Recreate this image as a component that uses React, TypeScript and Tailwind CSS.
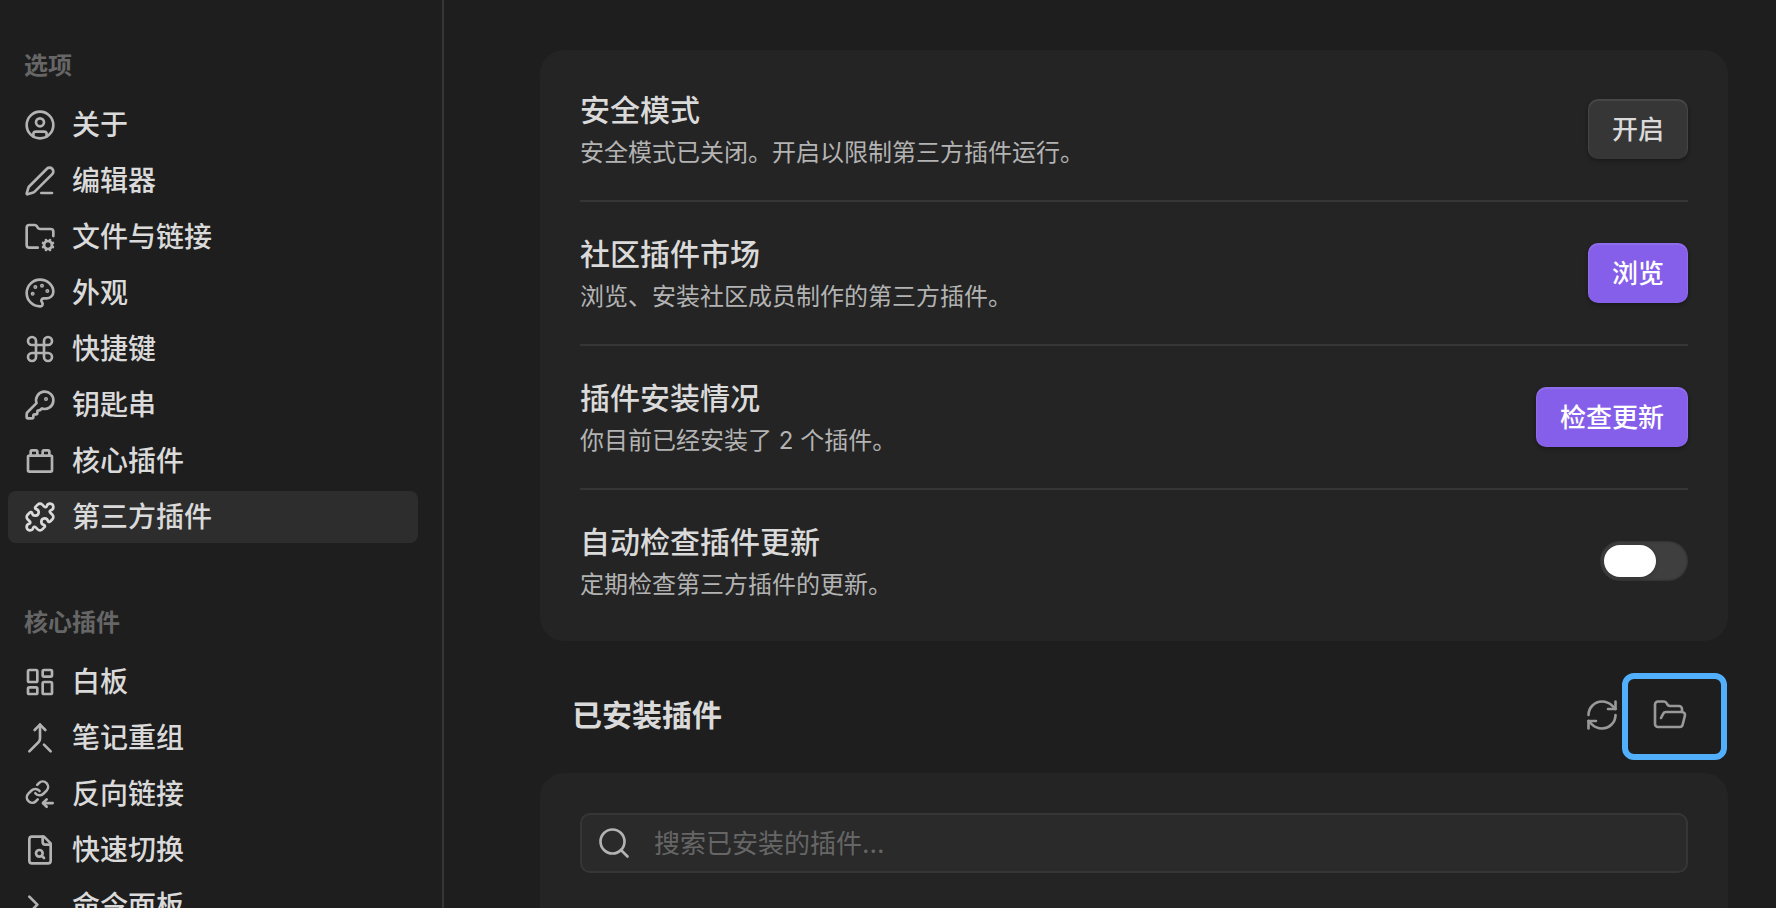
import { useState, type ReactNode } from 'react';
import {
  CircleUser,
  Command,
  FolderCog,
  FolderOpen,
  KeyRound,
  LayoutDashboard,
  Merge,
  Palette,
  PenLine,
  Puzzle,
  RefreshCw,
  Search,
  Terminal,
  ToyBrick,
  X,
} from 'lucide-react';

const BacklinkIcon = () => (
  <svg
    viewBox="0 0 24 24"
    fill="none"
    stroke="currentColor"
    strokeWidth="2"
    strokeLinecap="round"
    strokeLinejoin="round"
  >
    <g transform="translate(0.5 1) scale(0.8)" strokeWidth="2.4">
      <path d="M10 13a5 5 0 0 0 7.54.54l3-3a5 5 0 0 0-7.07-7.07l-1.72 1.71" />
      <path d="M14 11a5 5 0 0 0-7.54-.54l-3 3a5 5 0 0 0 7.07 7.07l1.71-1.71" />
    </g>
    <path d="M21.5 18.8h-7" />
    <path d="m17 16-2.8 2.8 2.8 2.8" />
  </svg>
);

const FileSearchIcon = () => (
  <svg
    viewBox="0 0 24 24"
    fill="none"
    stroke="currentColor"
    strokeWidth="2"
    strokeLinecap="round"
    strokeLinejoin="round"
  >
    <path d="M15 2H6a2 2 0 0 0-2 2v16a2 2 0 0 0 2 2h12a2 2 0 0 0 2-2V7Z" />
    <path d="M14 2v4a2 2 0 0 0 2 2h4" />
    <circle cx="11.5" cy="14.5" r="2.5" />
    <path d="M13.3 16.3 15 18" />
  </svg>
);

const navGroups = [
  {
    title: '选项',
    items: [
      { label: '关于', icon: CircleUser },
      { label: '编辑器', icon: PenLine },
      { label: '文件与链接', icon: FolderCog },
      { label: '外观', icon: Palette },
      { label: '快捷键', icon: Command },
      { label: '钥匙串', icon: KeyRound },
      { label: '核心插件', icon: ToyBrick },
      { label: '第三方插件', icon: Puzzle },
    ],
  },
  {
    title: '核心插件',
    items: [
      { label: '白板', icon: LayoutDashboard },
      { label: '笔记重组', icon: Merge },
      { label: '反向链接', icon: BacklinkIcon },
      { label: '快速切换', icon: FileSearchIcon },
      { label: '命令面板', icon: Terminal },
    ],
  },
];

const Sidebar = () => {
  const [active, setActive] = useState('第三方插件');

  return (
    <aside className="flex w-[444px] shrink-0 flex-col gap-[62px] overflow-hidden border-r-2 border-[#363636] pt-12 pr-6 pl-2">
      {navGroups.map((group) => (
        <nav key={group.title} aria-label={group.title} className="shrink-0">
          <h2 className="mb-[15px] px-4 text-[24px] leading-[36px] font-semibold text-[#666666]">
            {group.title}
          </h2>
          <ul className="flex flex-col gap-1">
            {group.items.map(({ label, icon: Icon }) => {
              const isActive = group.title === '选项' && label === active;
              return (
                <li key={label}>
                  <button
                    className={`flex h-[52px] w-full items-center gap-4 rounded-lg px-4 text-[28px] leading-[36px] font-medium text-[#dadada] ${
                      isActive ? 'bg-[#2d2d2d]' : ''
                    }`}
                    onClick={() => setActive(label)}
                  >
                    <span
                      className={`size-8 shrink-0 [&>svg]:size-8 ${
                        isActive ? 'text-[#dadada]' : 'text-[#b3b3b3]'
                      }`}
                    >
                      <Icon />
                    </span>
                    {label}
                  </button>
                </li>
              );
            })}
          </ul>
        </nav>
      ))}
    </aside>
  );
};

type SettingItemProps = {
  name: ReactNode;
  description: string;
  children: ReactNode;
};

const SettingItem = ({ name, description, children }: SettingItemProps) => (
  <div className="flex items-center justify-between gap-8 border-b-2 border-[#363636] py-8 last:border-b-0">
    <div>
      <h3 className="text-[30px] leading-[40px] font-medium text-[#dadada]">
        {name}
      </h3>
      <p className="mt-2 text-[24px] leading-[30px] text-[#b3b3b3]">
        {description}
      </p>
    </div>
    {children}
  </div>
);

type ButtonProps = {
  primary?: boolean;
  children: ReactNode;
};

const Button = ({ primary, children }: ButtonProps) => (
  <button
    className={`h-[60px] shrink-0 rounded-[10px] px-6 pt-0.5 text-[26px] leading-[36px] font-medium shadow-[inset_0_1px_1px_1px_rgba(255,255,255,0.09),0_2px_4px_0_rgba(0,0,0,0.3)] ${
      primary ? 'bg-[#855fea] text-white' : 'bg-[#363636] text-[#dadada]'
    }`}
  >
    {children}
  </button>
);

const App = () => {
  const [autoCheck, setAutoCheck] = useState(false);

  return (
    <div className="relative flex h-screen overflow-hidden bg-[#1e1e1e] font-['Inter','Noto_Sans_CJK_SC',sans-serif]">
      <Sidebar />
      <main className="flex-1 overflow-hidden pt-[50px] pr-12 pl-24">
        <section className="rounded-3xl bg-[#242424] px-10 pt-2 pb-[9px]">
          <SettingItem
            name="安全模式"
            description="安全模式已关闭。开启以限制第三方插件运行。"
          >
            <Button>开启</Button>
          </SettingItem>
          <SettingItem
            name="社区插件市场"
            description="浏览、安装社区成员制作的第三方插件。"
          >
            <Button primary>浏览</Button>
          </SettingItem>
          <SettingItem
            name="插件安装情况"
            description="你目前已经安装了 2 个插件。"
          >
            <Button primary>检查更新</Button>
          </SettingItem>
          <SettingItem
            name={<label htmlFor="auto-check">自动检查插件更新</label>}
            description="定期检查第三方插件的更新。"
          >
            <input
              id="auto-check"
              type="checkbox"
              role="switch"
              checked={autoCheck}
              onChange={(e) => setAutoCheck(e.target.checked)}
              className="h-10 w-[88px] shrink-0 appearance-none rounded-full bg-[#3f3f3f] p-1 shadow-[inset_0_0_2px_1px_rgba(0,0,0,0.2)] before:block before:h-8 before:w-[52px] before:rounded-full before:bg-white before:shadow-[0_1px_4px_rgba(0,0,0,0.2)] checked:bg-[#855fea] checked:before:ml-7"
            />
          </SettingItem>
        </section>

        <div className="flex items-center justify-between pt-11 pr-7 pb-7 pl-8">
          <h2 className="text-[30px] leading-[40px] font-bold text-[#dadada]">
            已安装插件
          </h2>
          <div className="flex gap-2 text-[#999999]">
            <button aria-label="重新加载插件" className="p-3">
              <RefreshCw size={36} strokeWidth={1.75} />
            </button>
            <button aria-label="打开插件文件夹" className="relative p-3">
              <FolderOpen size={36} strokeWidth={1.75} />
              {/* Highlight frame */}
              <span className="absolute -top-3 -right-[27px] -bottom-[15px] -left-[18px] rounded-xl border-6 border-[#51affc]"></span>
            </button>
          </div>
        </div>

        <section className="h-screen rounded-3xl bg-[#242424] p-10">
          <label className="flex h-[60px] items-center gap-[22px] rounded-[10px] border-2 border-[#363636] bg-[#2a2a2a] px-3.5">
            <Search
              size={36}
              strokeWidth={1.75}
              className="shrink-0 text-[#b3b3b3]"
            />
            <input
              type="search"
              aria-label="搜索已安装的插件"
              placeholder="搜索已安装的插件..."
              className="min-w-0 flex-1 bg-transparent pt-0.5 text-[26px] leading-[36px] text-[#dadada] outline-none placeholder:text-[#666666]"
            />
          </label>
        </section>
      </main>
      <button
        aria-label="关闭"
        className="absolute top-1.5 -right-[29px] text-[#999999]"
      >
        <X size={36} strokeWidth={1.5} />
      </button>
    </div>
  );
};

export default App;
